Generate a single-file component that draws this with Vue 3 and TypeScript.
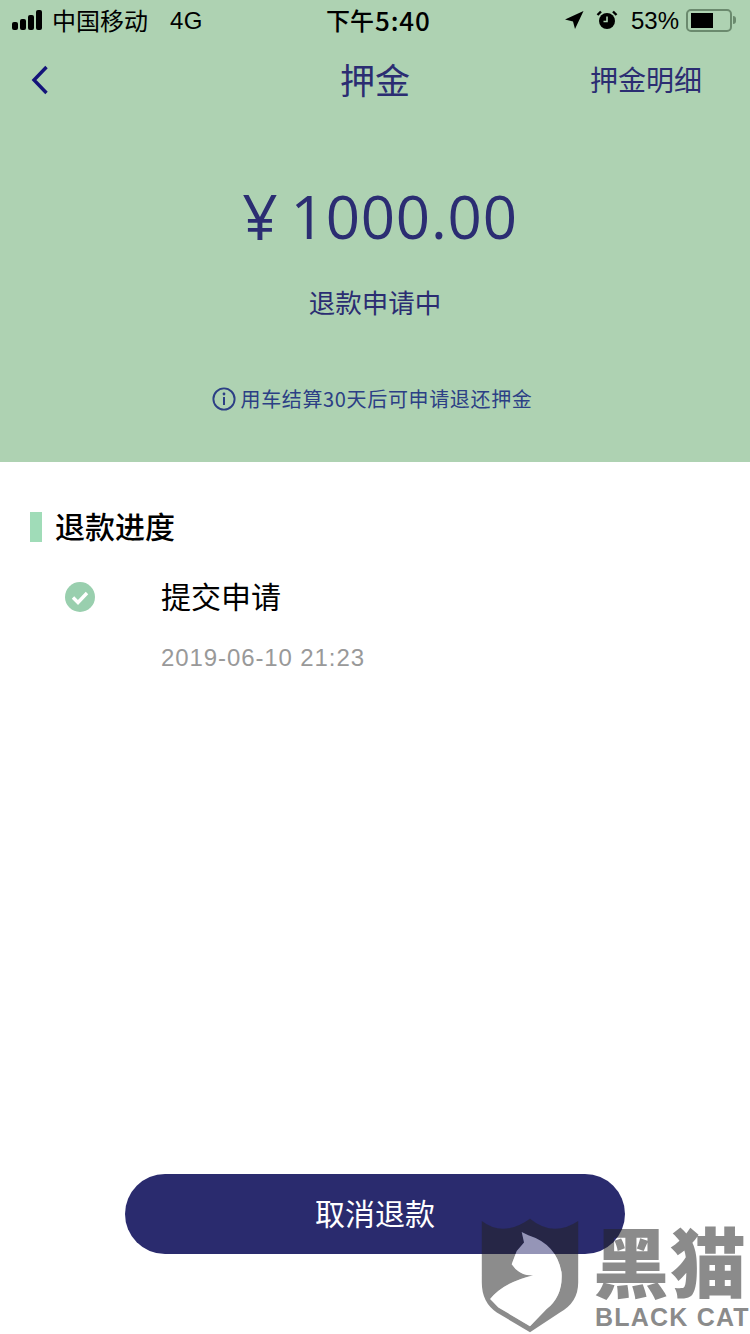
<script setup lang="ts">
const signal: { h: number }[] = [{ h: 8 }, { h: 11 }, { h: 15 }, { h: 20 }]
</script>

<template>
  <div class="page">
    <header class="hero">
      <div class="status">
        <div class="status-left">
          <div class="bars"><i v-for="(b, n) in signal" :key="n" :style="{ height: b.h + 'px' }"></i></div>
          <span class="carrier">中国移动</span>
          <span class="net">4G</span>
        </div>
        <div class="clock"><span class="ampm">下午</span><span class="time">5:40</span></div>
        <div class="status-right">
          <svg class="loc" width="20" height="20" viewBox="0 0 20 20"><path d="M1 9.5 19.5 1 11 19 9 11.5Z" fill="#000"/></svg>
          <svg class="alarm" width="22" height="22" viewBox="0 0 22 22">
            <circle cx="11" cy="12" r="8" fill="#000"/>
            <path d="M11 7.5V12.5H7.5" fill="none" stroke="#aed2b2" stroke-width="1.6"/>
            <path d="M1.5 6 5 2.5M20.5 6 17 2.5" stroke="#000" stroke-width="2.4" fill="none"/>
          </svg>
          <span class="pct">53%</span>
          <div class="battery"><div class="level"></div></div>
          <div class="nub"></div>
        </div>
      </div>
      <nav class="nav">
        <svg class="back" width="18" height="30" viewBox="0 0 18 30"><path d="M15.5 2 3 15 15.5 28" fill="none" stroke="#14147a" stroke-width="3.4"/></svg>
        <h1>押金</h1>
        <a>押金明细</a>
      </nav>
      <div class="amount"><span class="yen">¥</span><span>1000.00</span></div>
      <div class="state">退款申请中</div>
      <div class="note">
        <svg width="24" height="24" viewBox="0 0 24 24">
          <circle cx="12" cy="12" r="10.6" fill="none" stroke="#2c3f85" stroke-width="1.9"/>
          <circle cx="12" cy="7" r="1.4" fill="#2c3f85"/>
          <rect x="11" y="10" width="2" height="8" fill="#2c3f85"/>
        </svg>
        <span>用车结算30天后可申请退还押金</span>
      </div>
    </header>

    <main class="content">
      <h2 class="section">退款进度</h2>
      <div class="step">
        <div class="step-icon">
          <svg width="30" height="30" viewBox="0 0 30 30">
            <circle cx="15" cy="15" r="15" fill="#99cfae"/>
            <path d="M8 15.5 13 20.5 22 11" fill="none" stroke="#fff" stroke-width="3.4"/>
          </svg>
        </div>
        <div class="step-body">
          <div class="step-title">提交申请</div>
          <div class="step-date">2019-06-10 21:23</div>
        </div>
      </div>
    </main>

    <footer class="foot"><button class="cancel">取消退款</button></footer>

    <div class="mark">
      <svg class="shield" width="100" height="118" viewBox="60 140 300 355">
        <path fill-rule="evenodd" d="M65 155Q130 205 210 148 280 205 355 155V340Q355 400 300 430L210 490 110 430Q65 400 65 340ZM185 188 205 198Q290 225 305 310 310 380 260 420L210 472 115 415 90 390Q130 340 220 318 180 322 155 285L170 245 192 220Z" fill="#222" fill-opacity=".52"/>
        <path d="M185 188 205 198Q290 225 305 310 310 380 260 420L210 472 115 415 90 390Q130 340 220 318 180 322 155 285L170 245 192 220Z" fill="#fff" fill-opacity=".5"/>
      </svg>
      <div class="mark-text">
        <div class="mark-cn">黑猫</div>
        <div class="mark-en">BLACK CAT</div>
      </div>
    </div>
  </div>
</template>

<style scoped>
.page {
  position: relative;
  width: 750px;
  height: 1334px;
  overflow: hidden;
  display: flex;
  flex-direction: column;
  background: #fff;
  font-family: "Noto Sans CJK SC", "Noto Sans", sans-serif;
}
.hero {
  height: 462px;
  flex: none;
  background: #aed2b2;
  color: #2b2d72;
  display: flex;
  flex-direction: column;
  align-items: center;
}
.status {
  width: 100%;
  height: 40px;
  padding: 2px 12px 0;
  box-sizing: border-box;
  display: flex;
  align-items: center;
  justify-content: space-between;
  color: #000;
  position: relative;
}
.status-left, .status-right { display: flex; align-items: center; }
.bars { display: flex; align-items: flex-end; gap: 2px; height: 20px; margin-top: -3px; }
.bars i { width: 6px; background: #000; border-radius: 2px; display: block; }
.carrier { font-size: 24px; margin: -2px 0 0 10px; line-height: 38px; }
.net { font-family: "Liberation Sans", sans-serif; font-size: 24px; letter-spacing: .5px; margin-left: 22px; }
.clock {
  position: absolute;
  left: 326px;
  top: 0;
  line-height: 40px;
  font-weight: 500;
  display: flex;
  white-space: nowrap;
}
.ampm { font-size: 24px; }
.time { font-size: 26px; letter-spacing: .9px; margin-left: 1px; }
.loc { margin-right: 13px; margin-top: -3px; }
.alarm { margin-right: 13px; margin-top: -3px; margin-left: -1px; }
.pct { font-family: "Liberation Sans", sans-serif; font-size: 24px; margin-right: 7px; margin-top: -1px; }
.battery {
  width: 46px;
  height: 23px;
  border: 2px solid #6b8a6e;
  border-radius: 5px;
  box-sizing: border-box;
  padding: 2px 3px;
  margin-top: -2px;
}
.level { width: 22px; height: 100%; background: #000; }
.nub { width: 3px; height: 8px; background: #6b8a6e; border-radius: 0 3px 3px 0; margin: -2px 2px 0 1px; }
.nav {
  width: 100%;
  height: 80px;
  position: relative;
  display: flex;
  align-items: center;
  justify-content: center;
}
.back { position: absolute; left: 31px; top: 25px; }
.nav h1 { margin: -2px 0 0; font-size: 35px; font-weight: 400; line-height: 78px; }
.nav a { position: absolute; right: 48px; top: -1px; line-height: 80px; font-size: 28px; }
.amount {
  margin: 54px 0 0 10px;
  height: 84px;
  font-family: "Open Sans", sans-serif;
  font-size: 60px;
  letter-spacing: .8px;
  line-height: 84px;
  display: flex;
  align-items: center;
}
.yen { margin-right: 12px; font-size: 62px; }
.state { margin-top: 24px; font-size: 26.5px; line-height: 40px; }
.note {
  margin: 62px 6px 0 0;
  display: flex;
  align-items: center;
  gap: 5px;
  font-size: 20px;
  letter-spacing: .65px;
  line-height: 30px;
  color: #2c3f85;
}
.content { flex: 1; padding: 50px 30px 0; }
.section {
  margin: 0;
  height: 30px;
  line-height: 26px;
  padding-left: 13px;
  border-left: 12px solid #a0dcb8;
  font-size: 30px;
  font-weight: 500;
  color: #000;
}
.step { display: flex; margin-top: 25px; }
.step-icon { width: 131px; padding: 15px 0 0 35px; box-sizing: border-box; }
.step-icon svg { display: block; }
.step-title { font-size: 30px; line-height: 56px; margin-bottom: 4px; color: #000; }
.step-date {
  font-family: "Liberation Sans", sans-serif;
  font-size: 24px;
  letter-spacing: .9px;
  line-height: 62px;
  color: #999;
}
.foot { flex: none; display: flex; justify-content: center; padding-bottom: 80px; }
.cancel {
  width: 500px;
  height: 80px;
  border: 0;
  border-radius: 40px;
  background: #2a2b6e;
  color: #fff;
  font: inherit;
  font-size: 30px;
  padding: 0 0 4px;
}
.mark {
  position: absolute;
  left: 480px;
  top: 1216px;
  display: flex;
  gap: 15px;
}
.shield { display: block; }
.mark-text { width: 156px; color: #222; opacity: .52; }
.mark-cn {
  height: 88px;
  font-size: 76px;
  line-height: 86px;
  font-weight: 900;
  letter-spacing: 1px;
  white-space: nowrap;
  margin-left: -2px;
}
.mark-en {
  font-family: "Liberation Sans", sans-serif;
  font-weight: 700;
  font-size: 25px;
  letter-spacing: 1.2px;
  line-height: 26px;
  white-space: nowrap;
}
</style>
